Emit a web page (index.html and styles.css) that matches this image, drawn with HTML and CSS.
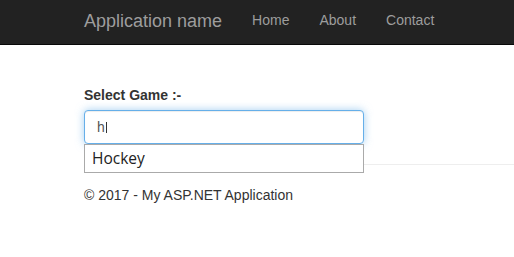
FILE: index.html
```html
<!DOCTYPE html>
<html>
<head>
<meta charset="utf-8">
<title>Select Game</title>
<link rel="stylesheet" href="styles.css">
</head>
<body>
<div class="navbar">
  <a class="brand" href="#">Application name</a>
  <a class="nav-link" href="#">Home</a>
  <a class="nav-link" href="#">About</a>
  <a class="nav-link" href="#">Contact</a>
</div>
<div class="content">
  <label class="field-label">Select Game :-</label>
  <div class="combo">
    <div class="text-input">h<span class="caret"></span></div>
    <ul class="menu">
      <li class="menu-item">Hockey</li>
    </ul>
  </div>
  <hr class="rule">
  <footer class="footer">© 2017 - My ASP.NET Application</footer>
</div>
</body>
</html>
```

FILE: styles.css
```css
html, body {
  margin: 0;
  padding: 0;
  background: #fff;
  font-family: "Liberation Sans", Arial, sans-serif;
  font-size: 14px;
  line-height: 20px;
  color: #333;
}

.navbar {
  display: flex;
  align-items: flex-start;
  height: 44px;
  background: #222;
  border-bottom: 1px solid #080808;
  padding-left: 69px;
  box-sizing: content-box;
}

.brand {
  font-size: 18px;
  line-height: 20px;
  color: #9d9d9d;
  text-decoration: none;
  padding: 11px 15px 0 15px;
}

.nav-link {
  font-size: 14px;
  line-height: 20px;
  color: #9d9d9d;
  text-decoration: none;
  padding: 10px 15px 0 15px;
}

.content {
  padding: 40px 0 0 84px;
}

.field-label {
  display: block;
  font-weight: bold;
  margin-bottom: 5px;
}

.combo {
  position: relative;
  width: 280px;
}

.text-input {
  box-sizing: border-box;
  height: 34px;
  padding: 6px 12px;
  font-size: 14px;
  line-height: 20px;
  color: #555;
  background: #fff;
  border: 1px solid #66afe9;
  border-radius: 4px;
  box-shadow: inset 0 1px 1px rgba(0,0,0,.075), 0 0 8px rgba(102,175,233,.6);
}

.caret {
  display: inline-block;
  width: 1px;
  height: 11px;
  background: #333;
  margin-left: 1px;
  vertical-align: -1px;
}

.menu {
  position: absolute;
  left: 0;
  top: 34px;
  width: 280px;
  box-sizing: border-box;
  margin: 0;
  padding: 0;
  list-style: none;
  background: #fff;
  border: 1px solid #aaa;
  z-index: 2;
}

.menu-item {
  font-family: "Open Sans", "Noto Sans", sans-serif;
  font-size: 15.5px;
  line-height: 27px;
  color: #222;
  padding-left: 7px;
}

.rule {
  margin: 20px 0 20px 0;
  border: 0;
  border-top: 1px solid #eee;
  height: 0;
}

.footer {
  display: block;
  color: #333;
}
```
